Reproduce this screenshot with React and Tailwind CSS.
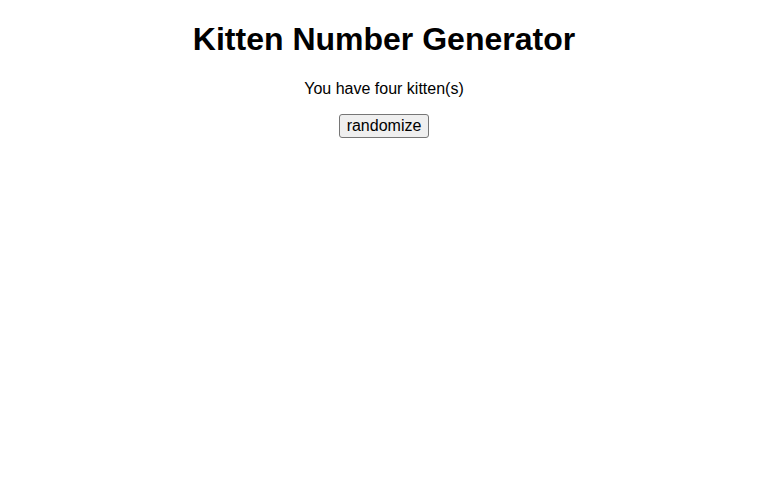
import { useState } from "react";

const WORDS = ["zero", "one", "two", "three", "four", "five", "six", "seven", "eight", "nine", "ten"];

export default function App() {
  const [count, setCount] = useState(4);

  function randomize() {
    setCount(Math.floor(Math.random() * WORDS.length));
  }

  return (
    <div className="text-center text-black bg-white font-['Liberation_Sans',Arial,sans-serif] text-base">
      <h1 className="text-[32px] font-bold leading-[37px] pt-[21px] mb-[22px]">Kitten Number Generator</h1>
      <p className="leading-[18px] mb-4">You have {WORDS[count]} kitten(s)</p>
      <button
        onClick={randomize}
        className="h-[24px] px-[7px] leading-[20px] bg-[#efefef] border border-[#767676] rounded-[3px] hover:bg-[#e5e5e5]"
      >
        randomize
      </button>
    </div>
  );
}
